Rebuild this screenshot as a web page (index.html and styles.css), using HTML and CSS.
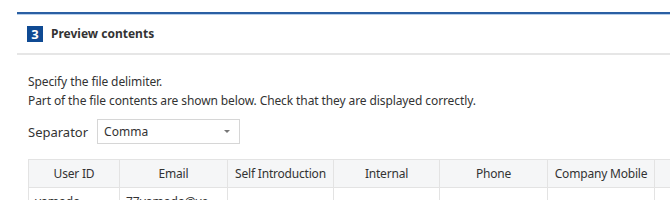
FILE: index.html
```html
<!DOCTYPE html>
<html lang="en">
<head>
  <meta charset="UTF-8" />
  <title>Preview contents</title>
  <link rel="stylesheet" href="styles.css">
</head>
<body>
  <div class="section">
    <div class="section-head">
      <span class="step">3</span>
      <h3>Preview contents</h3>
    </div>

    <div class="section-body">
      <p>Specify the file delimiter.</p>
      <p>Part of the file contents are shown below. Check that they are displayed correctly.</p>

      <div class="separator">
        <label>Separator</label>
        <div class="select">
          <span>Comma</span>
          <span class="caret"></span>
        </div>
      </div>

      <div class="table-wrap">
        <table class="preview">
          <thead>
            <tr>
              <th class="c1">User ID</th>
              <th class="c2">Email</th>
              <th class="c3">Self Introduction</th>
              <th class="c4">Internal</th>
              <th class="c5">Phone</th>
              <th class="c6">Company Mobile</th>
              <th class="c7"></th>
            </tr>
          </thead>
          <tbody>
            <tr>
              <td>yamada</td>
              <td>77yamada@yourcompany.com</td>
              <td></td>
              <td></td>
              <td></td>
              <td></td>
              <td></td>
            </tr>
          </tbody>
        </table>
      </div>
    </div>
  </div>
</body>
</html>
```

FILE: styles.css
```css
* {
  box-sizing: border-box;
  margin: 0;
  padding: 0;
}

html, body {
  height: 200px;
  overflow: hidden;
}

body {
  font-family: "Noto Sans", "Noto Sans CJK JP", sans-serif;
  font-size: 12px;
  color: #333;
  background: #fff;
}

.section {
  margin-top: 12px;
  margin-left: 17px;
  border-top: 2px solid #2a5fa3;
}

.section-head {
  display: flex;
  align-items: center;
  height: 41px;
  padding-left: 10px;
  border-bottom: 2px solid #e6e6e6;
  box-shadow: inset 0 1px 0 #b8cfea;
}

.step {
  width: 16px;
  height: 16px;
  margin-top: 1px;
  background: #0f4a93;
  color: #fff;
  font-size: 13px;
  font-weight: bold;
  line-height: 16px;
  text-align: center;
}

.section-head h3 {
  margin-left: 8px;
  font-size: 12px;
  font-weight: bold;
  color: #333;
}

.section-body {
  padding: 17px 0 0 11px;
}

.section-body p {
  line-height: 19px;
  letter-spacing: -0.1px;
}

.separator {
  display: flex;
  align-items: center;
  margin-top: 9px;
}

.separator label {
  font-size: 13px;
  margin-right: 9px;
}

.select {
  width: 143px;
  height: 25px;
  border: 1px solid #d6d6d6;
  display: flex;
  align-items: center;
  justify-content: space-between;
  padding: 0 9px 0 6px;
}

.caret {
  width: 0;
  height: 0;
  border-left: 3px solid transparent;
  border-right: 3px solid transparent;
  border-top: 3px solid #777;
}

.table-wrap {
  margin-top: 15px;
  overflow: hidden;
}

.preview {
  border-collapse: collapse;
  table-layout: fixed;
  width: 680px;
}

.preview th,
.preview td {
  border: 1px solid #e3e3e3;
  font-weight: normal;
  height: 28px;
  padding: 0 6px;
  white-space: nowrap;
  overflow: hidden;
  text-overflow: ellipsis;
}

.preview th {
  background: #f5f6f7;
  text-align: center;
  padding: 0 2px;
  letter-spacing: -0.2px;
}

.preview td {
  text-align: left;
}

.c1 { width: 91px; }
.c2 { width: 108px; }
.c3 { width: 106px; }
.c4 { width: 106px; }
.c5 { width: 108px; }
.c6 { width: 107px; }
.c7 { width: 54px; }
```
